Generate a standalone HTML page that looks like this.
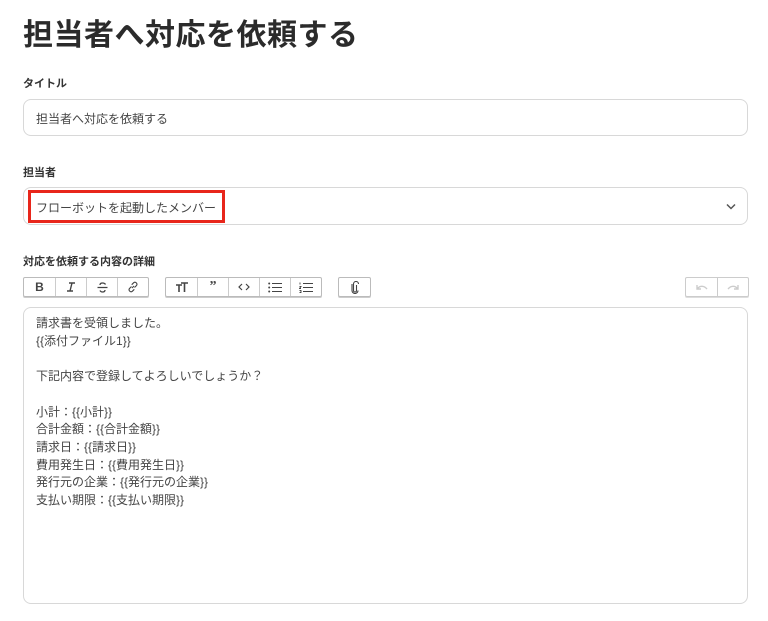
<!DOCTYPE html>
<html><head><meta charset="utf-8"><style>
*{box-sizing:border-box;margin:0;padding:0}
body{width:768px;height:621px;background:#fff;font-family:"Liberation Sans","Noto Sans CJK JP",sans-serif;color:#333;position:relative;overflow:hidden}
.a{position:absolute}
h1{position:absolute;left:23px;top:17px;font-size:30px;font-weight:bold;line-height:38px;color:#2b2b2b;letter-spacing:0.5px}
.lbl{position:absolute;left:23px;font-size:11px;font-weight:bold;color:#333}
.box{position:absolute;left:23px;width:725px;border:1px solid #d8d8d8;border-radius:8px;background:#fff}
.t{font-size:12px;color:#444}
.grp{position:absolute;top:277px;height:20px;border:1px solid #bbb;border-radius:2px;display:flex;box-shadow:0 1px 0 #ccc}
.grp div{width:31px;border-left:1px solid #ccc;display:flex;align-items:center;justify-content:center;font-size:12px;color:#444;font-weight:bold}
.grp div:first-child{border-left:none}
.ta{font-size:12px;color:#444;line-height:17.7px}
svg{display:block}
</style></head><body>
<h1>担当者へ対応を依頼する</h1>
<div class="lbl" style="top:75px">タイトル</div>
<div class="box" style="top:99px;height:37px"><div class="t a" style="left:12px;top:10px">担当者へ対応を依頼する</div></div>
<div class="lbl" style="top:164px">担当者</div>
<div class="box" style="top:187px;height:38px">
<div class="a" style="left:4px;top:2px;width:197px;height:33px;border:3px solid #e8261b"></div>
<div class="t a" style="left:12px;top:11px">フローボットを起動したメンバー</div>
<svg class="a" style="right:11px;top:15px" width="10" height="7" viewBox="0 0 10 7"><path d="M1 1.5 5 5.5 9 1.5" stroke="#555" stroke-width="1.5" fill="none"/></svg>
</div>
<div class="lbl" style="top:253px">対応を依頼する内容の詳細</div>
<div class="grp" style="left:23px">
<div>B</div>
<div><svg width="10" height="10" viewBox="0 0 10 10"><path d="M3 1h6M1 9h6M6 1 4 9" stroke="#444" stroke-width="1.4" fill="none"/></svg></div>
<div><svg width="11" height="11" viewBox="0 0 11 11"><path d="M8.5 2.5C8 1.5 7 1 5.5 1 4 1 3 1.8 3 3M0.5 5.5h10M3 8.5C3.5 9.5 4.5 10 5.5 10 7 10 8 9.2 8 8" stroke="#444" stroke-width="1.3" fill="none"/></svg></div>
<div><svg width="12" height="12" viewBox="0 0 12 12"><path d="M5 7 7 5M4.5 5.5 2.5 7.5a2 2 0 0 0 2.8 2.8L7.3 8.3M7.5 6.5l2-2a2 2 0 0 0-2.8-2.8L4.7 3.7" stroke="#444" stroke-width="1.1" fill="none"/></svg></div>
</div>
<div class="grp" style="left:165px">
<div><svg width="14" height="10" viewBox="0 0 14 10"><path d="M1 3h6M4 3v7M6 1h7M9.5 1v9" stroke="#444" stroke-width="1.6" fill="none"/></svg></div>
<div style="font-size:14px;font-family:'Liberation Serif',serif">”</div>
<div><svg width="12" height="8" viewBox="0 0 12 8"><path d="M4 1 1 4l3 3M8 1l3 3-3 3" stroke="#444" stroke-width="1.2" fill="none"/></svg></div>
<div><svg width="14" height="11" viewBox="0 0 14 11"><path d="M4 1.5h10M4 5.5h10M4 9.5h10" stroke="#444" stroke-width="1"/><circle cx="1.2" cy="1.5" r="1" fill="#444"/><circle cx="1.2" cy="5.5" r="1" fill="#444"/><circle cx="1.2" cy="9.5" r="1" fill="#444"/></svg></div>
<div><svg width="14" height="11" viewBox="0 0 14 11"><path d="M4 1.5h10M4 5.5h10M4 9.5h10M1 .5v2M.5 4.5h1.5l-1.5 2h1.5M.5 8.5h1.5v2H.5" stroke="#444" stroke-width="0.9" fill="none"/></svg></div>
</div>
<div class="grp" style="left:338px"><div><svg width="8" height="13" viewBox="0 0 8 13"><path d="M5.5 4v5.5a1.5 1.5 0 0 1-3 0V3a2.5 2.5 0 0 1 5 0" stroke="#444" stroke-width="1.1" fill="none"/><path d="M1 3v6.5a3 3 0 0 0 6 0" stroke="#444" stroke-width="1.1" fill="none"/></svg></div></div>
<div class="grp" style="left:685px;box-shadow:0 1px 0 #ddd;border-color:#ccc">
<div><svg width="12" height="7" viewBox="0 0 12 7"><path d="M1 1v4h4M1.5 4.5C4 1.5 8 1.5 11 5" stroke="#ccc" stroke-width="1.4" fill="none"/></svg></div>
<div><svg width="12" height="7" viewBox="0 0 12 7"><path d="M11 1v4H7M10.5 4.5C8 1.5 4 1.5 1 5" stroke="#ccc" stroke-width="1.4" fill="none"/></svg></div>
</div>
<div class="box" style="top:307px;height:297px">
<div class="ta a" style="left:12px;top:7px">請求書を受領しました。<br>{{添付ファイル1}}<br><br>下記内容で登録してよろしいでしょうか？<br><br>小計：{{小計}}<br>合計金額：{{合計金額}}<br>請求日：{{請求日}}<br>費用発生日：{{費用発生日}}<br>発行元の企業：{{発行元の企業}}<br>支払い期限：{{支払い期限}}</div>
</div>
</body></html>
